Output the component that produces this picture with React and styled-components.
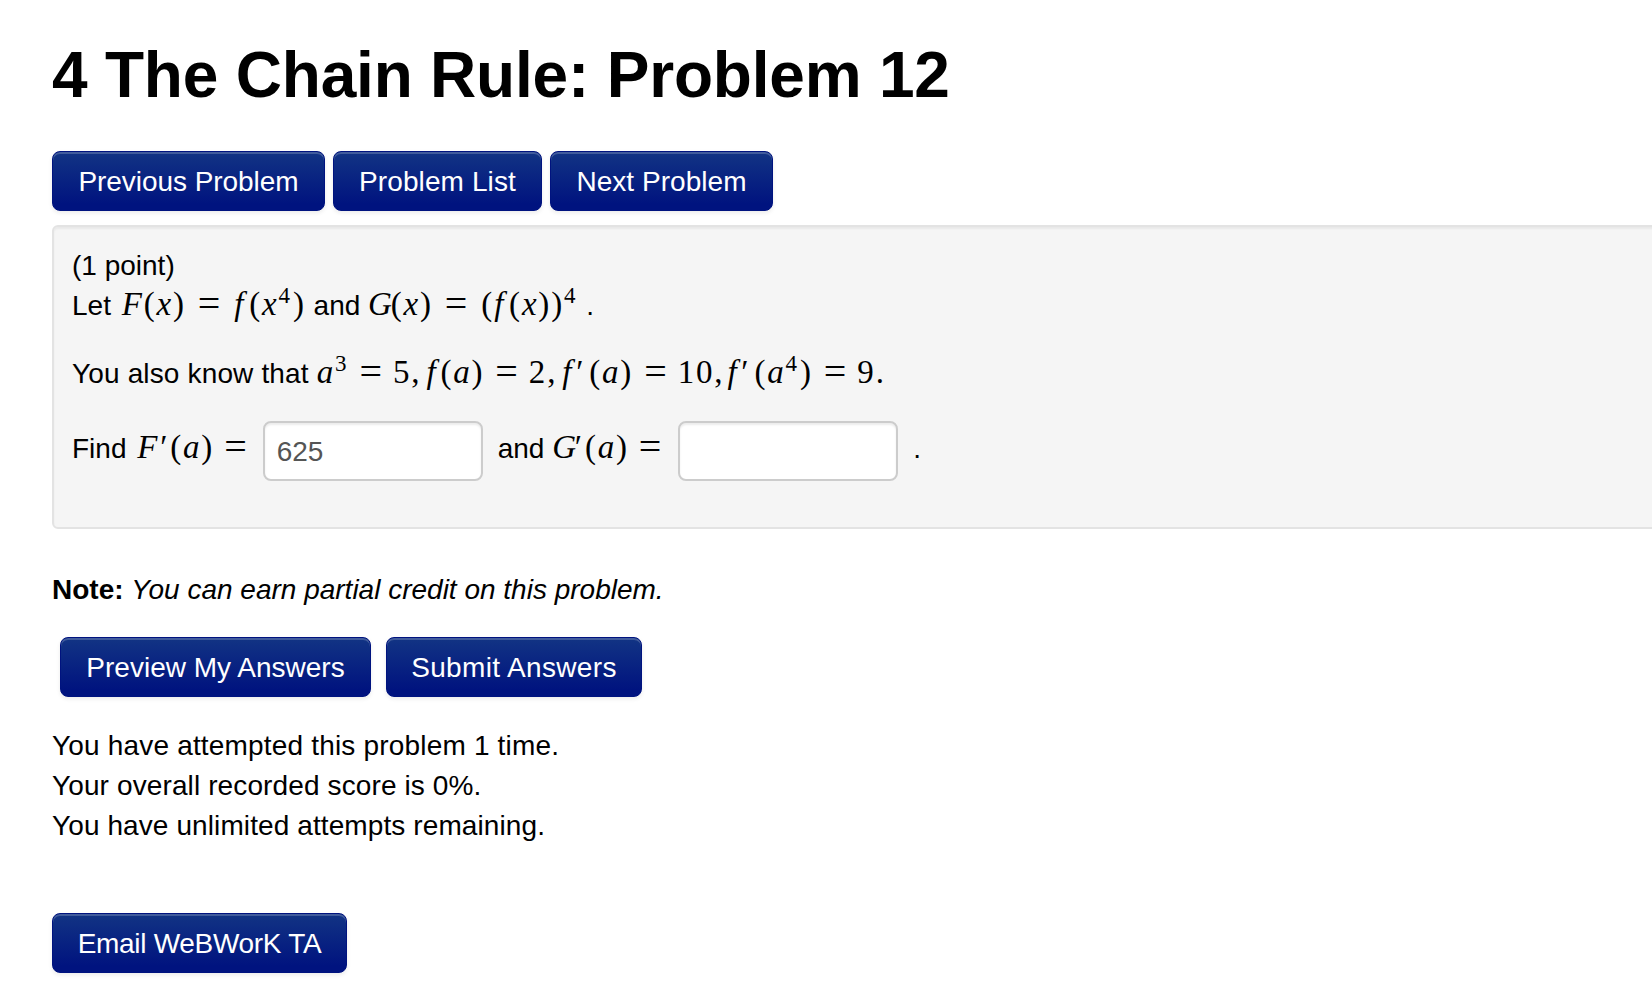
import React from "react";
import styled, { createGlobalStyle } from "styled-components";

const GlobalStyle = createGlobalStyle`
  html, body {
    margin: 0;
    padding: 0;
    background: #fff;
    overflow-x: hidden;
  }
  body {
    font-family: "Liberation Sans", Arial, sans-serif;
    font-size: 28px;
    line-height: 40px;
    color: #000;
  }
`;

const Page = styled.div`
  width: 1800px;
  padding: 0 0 29px 52px;
`;

const Title = styled.h1`
  margin: 0;
  padding-top: 35px;
  font-size: 64px;
  line-height: 80px;
  font-weight: 700;
  letter-spacing: -0.2px;
`;

const ButtonRow = styled.div`
  display: flex;
  gap: ${(props) => props.gap || 8}px;
  margin: ${(props) => props.margin || "0"};
`;

const Button = styled.a`
  display: flex;
  align-items: center;
  justify-content: center;
  box-sizing: border-box;
  height: 60px;
  width: ${(props) => props.width}px;
  padding-top: 2px;
  border: 1px solid #00137f;
  border-radius: 8px;
  background: linear-gradient(to bottom, #123484, #00137f 90%);
  box-shadow: inset 0 2px 0 rgba(255, 255, 255, 0.2), 0 2px 4px rgba(0, 0, 0, 0.08);
  color: #fff;
  font-size: 28px;
  letter-spacing: ${(props) => props.tracking || 0}px;
  cursor: pointer;
`;

const Well = styled.div`
  box-sizing: border-box;
  height: 304px;
  margin-top: 14px;
  padding: 19px 18px;
  background: #f5f5f5;
  border: 2px solid #e3e3e3;
  border-radius: 6px;
  box-shadow: inset 0 2px 2px rgba(0, 0, 0, 0.05);
`;

const Line = styled.div`
  height: ${(props) => props.height || 40}px;
  line-height: ${(props) => props.height || 40}px;
  margin-top: ${(props) => props.top || 0}px;
  letter-spacing: ${(props) => props.tracking || 0}px;
  white-space: pre;
`;

const Math = styled.span`
  margin-left: ${(props) => props.left || 0}px;
  font-family: "Liberation Serif", "Times New Roman", serif;
  font-size: 33px;
  line-height: 0;
  letter-spacing: 1.8px;
`;

const Var = styled.i`
  font-style: italic;
  margin-right: ${(props) => props.gap || 0}px;
`;

const Eq = styled.span`
  margin: 0 ${(props) => props.right ?? 14}px 0 ${(props) => props.left ?? 12}px;
  font-size: 40px;
  letter-spacing: 0;
  vertical-align: -2px;
`;

const Sup = styled.sup`
  margin-right: ${(props) => props.gap || 0}px;
  font-size: 23px;
  line-height: 0;
  vertical-align: 12px;
  letter-spacing: 0;
`;

const Prime = styled.span`
  margin: 0 ${(props) => props.right ?? 4}px 0 ${(props) => props.left ?? 3}px;
`;

const Comma = styled.span`
  margin-right: ${(props) => props.gap ?? 5}px;
`;

const Answer = styled.input`
  box-sizing: border-box;
  width: 220px;
  height: 60px;
  margin: 0 15px 0 ${(props) => props.left || 0}px;
  padding: 2px 12px 0;
  vertical-align: middle;
  background: #fff;
  border: 2px solid #ccc;
  border-radius: 8px;
  box-shadow: inset 0 2px 2px rgba(0, 0, 0, 0.075);
  font-family: "Liberation Sans", Arial, sans-serif;
  font-size: 28px;
  color: #555;
  outline: none;
`;

const Note = styled.p`
  margin: 41px 0 0;
`;

const Status = styled.div`
  margin-top: 29px;
`;

const StatusLine = styled.div`
  letter-spacing: ${(props) => props.tracking}px;
`;

const App = () => {
  return (
    <Page>
      <GlobalStyle />
      <Title>4 The Chain Rule: Problem 12</Title>
      <ButtonRow margin="36px 0 0">
        <Button width={273} tracking={-0.05}>Previous Problem</Button>
        <Button width={209} tracking={0.1}>Problem List</Button>
        <Button width={223} tracking={0.05}>Next Problem</Button>
      </ButtonRow>
      <Well>
        <Line>(1 point)</Line>
        <Line>
          Let{" "}
          <Math left={3}>
            <Var>F</Var>(<Var>x</Var>)<Eq>=</Eq>
            <Var gap={4}>f</Var>(<Var>x</Var>
            <Sup gap={3}>4</Sup>)
          </Math>{" "}
          and{" "}
          <Math>
            <Var gap={-3}>G</Var>(<Var>x</Var>)<Eq>=</Eq>(<Var gap={4}>f</Var>(<Var>x</Var>))
            <Sup gap={3}>4</Sup>
          </Math>{" "}
          .
        </Line>
        <Line top={28} tracking={0.15}>
          You also know that{" "}
          <Math>
            <Var>a</Var>
            <Sup>3</Sup>
            <Eq left={13} right={11}>=</Eq>5<Comma>,</Comma><Var gap={3}>f</Var>(<Var>a</Var>)
            <Eq left={11} right={11}>=</Eq>2<Comma>,</Comma><Var>f</Var>
            <Prime>′</Prime>(<Var>a</Var>)<Eq left={11} right={11}>=</Eq>10<Comma gap={3}>,</Comma><Var>f</Var>
            <Prime>′</Prime>(<Var>a</Var>
            <Sup gap={3}>4</Sup>)<Eq left={11} right={11}>=</Eq>9.
          </Math>
        </Line>
        <Line height={60} top={25}>
          Find{" "}
          <Math left={3}>
            <Var>F</Var>
            <Prime left={1} right={1}>′</Prime>(<Var>a</Var>)<Eq left={10}>=</Eq>
          </Math>
          <Answer left={2} defaultValue="625" />
          and{" "}
          <Math>
            <Var gap={-3}>G</Var>
            <Prime left={0} right={1}>′</Prime>(<Var>a</Var>)<Eq left={10}>=</Eq>
          </Math>
          <Answer left={3} />.
        </Line>
      </Well>
      <Note>
        <b>Note:</b> <i>You can earn partial credit on this problem.</i>
      </Note>
      <ButtonRow gap={15} margin="27px 0 0 8px">
        <Button width={311}>Preview My Answers</Button>
        <Button width={256} tracking={0.35}>Submit Answers</Button>
      </ButtonRow>
      <Status>
        <StatusLine tracking={0.18}>You have attempted this problem 1 time.</StatusLine>
        <StatusLine tracking={0.12}>Your overall recorded score is 0%.</StatusLine>
        <StatusLine tracking={0.1}>You have unlimited attempts remaining.</StatusLine>
      </Status>
      <ButtonRow margin="67px 0 0">
        <Button width={295} tracking={-0.3}>Email WeBWorK TA</Button>
      </ButtonRow>
    </Page>
  );
};

export default App;
